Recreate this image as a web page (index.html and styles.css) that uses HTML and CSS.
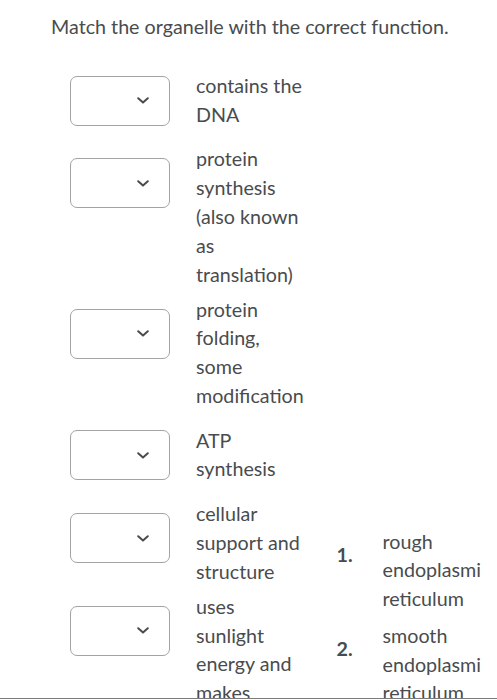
FILE: index.html
```html
<!DOCTYPE html>
<html lang="en">
<head>
<meta charset="utf-8">
<title>Match the organelle</title>
<link rel="stylesheet" href="styles.css">
</head>
<body>
<h1 class="prompt">Match the organelle with the correct function.</h1>
<div class="question">
  <div class="pairs">
    <div class="pair">
      <div class="select-cell"><div class="select"><svg class="chev" width="12" height="7" viewBox="0 0 12 7"><path d="M1.2 1.2 L6 5.6 L10.8 1.2" fill="none" stroke="#494c4e" stroke-width="2" stroke-linecap="round" stroke-linejoin="round"/></svg></div></div>
      <div class="desc">contains the DNA</div>
    </div>
    <div class="pair">
      <div class="select-cell"><div class="select"><svg class="chev" width="12" height="7" viewBox="0 0 12 7"><path d="M1.2 1.2 L6 5.6 L10.8 1.2" fill="none" stroke="#494c4e" stroke-width="2" stroke-linecap="round" stroke-linejoin="round"/></svg></div></div>
      <div class="desc">protein synthesis (also known as translation)</div>
    </div>
    <div class="pair">
      <div class="select-cell"><div class="select"><svg class="chev" width="12" height="7" viewBox="0 0 12 7"><path d="M1.2 1.2 L6 5.6 L10.8 1.2" fill="none" stroke="#494c4e" stroke-width="2" stroke-linecap="round" stroke-linejoin="round"/></svg></div></div>
      <div class="desc">protein folding, some modification</div>
    </div>
    <div class="pair">
      <div class="select-cell"><div class="select"><svg class="chev" width="12" height="7" viewBox="0 0 12 7"><path d="M1.2 1.2 L6 5.6 L10.8 1.2" fill="none" stroke="#494c4e" stroke-width="2" stroke-linecap="round" stroke-linejoin="round"/></svg></div></div>
      <div class="desc">ATP synthesis</div>
    </div>
    <div class="pair">
      <div class="select-cell"><div class="select"><svg class="chev" width="12" height="7" viewBox="0 0 12 7"><path d="M1.2 1.2 L6 5.6 L10.8 1.2" fill="none" stroke="#494c4e" stroke-width="2" stroke-linecap="round" stroke-linejoin="round"/></svg></div></div>
      <div class="desc">cellular support and structure</div>
    </div>
    <div class="pair">
      <div class="select-cell"><div class="select"><svg class="chev" width="12" height="7" viewBox="0 0 12 7"><path d="M1.2 1.2 L6 5.6 L10.8 1.2" fill="none" stroke="#494c4e" stroke-width="2" stroke-linecap="round" stroke-linejoin="round"/></svg></div></div>
      <div class="desc">uses sunlight energy and makes glucose</div>
    </div>
  </div>
  <ol class="choices">
    <li class="choice"><span class="num">1.</span><span class="choice-text">rough endoplasmic reticulum</span></li>
    <li class="choice"><span class="num">2.</span><span class="choice-text">smooth endoplasmic reticulum</span></li>
  </ol>
</div>
<div class="bottom-rule"></div>
</body>
</html>
```

FILE: styles.css
```css
html, body {
  margin: 0;
  padding: 0;
  background: #ffffff;
  overflow: hidden;
}
body {
  font-family: Lato, "Open Sans", "Liberation Sans", sans-serif;
  color: #494c4e;
  height: 700px;
}
.prompt {
  margin: 0;
  padding: 13px 0 0 51px;
  font-size: 19.7px;
  font-weight: 400;
  line-height: 28px;
  color: #494c4e;
}
.question {
  display: flex;
  align-items: flex-start;
  padding: 21.5px 0 0 70px;
}
.pairs {
  display: flex;
  flex-direction: column;
  gap: 6.3px;
}
.pair {
  display: flex;
  align-items: flex-start;
}
.select-cell {
  padding: 13px 0 13.6px 0;
}
.select {
  box-sizing: border-box;
  width: 100px;
  height: 50px;
  border: 1px solid #a3a3a3;
  border-radius: 7px;
  display: flex;
  align-items: center;
  justify-content: flex-end;
  padding-right: 20px;
}
.chev {
  display: block;
}
.desc {
  align-self: center;
  width: 108.5px;
  margin-left: 26px;
  font-size: 19.7px;
  line-height: 28.8px;
}
.choices {
  list-style: none;
  margin: 465px 0 0 32px;
  padding: 0;
  display: flex;
  flex-direction: column;
  gap: 8px;
}
.choice {
  display: flex;
  align-items: flex-start;
  font-size: 19.7px;
  line-height: 28.8px;
}
.num {
  width: 46px;
  padding-top: 13px;
  font-weight: 700;
  color: #494c4e;
}
.choice-text {
  width: 98px;
  overflow: hidden;
}
.bottom-rule {
  position: fixed;
  left: 0;
  right: 0;
  bottom: 0;
  height: 1px;
  background: #ffffff;
  border-top: 1px solid #7a7a7a;
}
```
